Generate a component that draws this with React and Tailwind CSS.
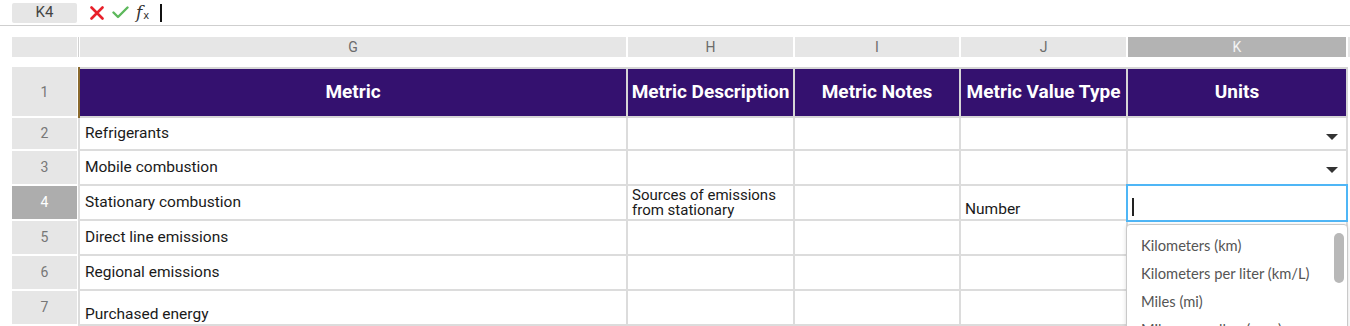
import React from "react";

const rows = [
  { n: "2", h: "h-[33px]", g: "Refrigerants", arrow: true },
  { n: "3", h: "h-[35px]", g: "Mobile combustion", arrow: true },
  { n: "4", h: "h-[35px]", g: "Stationary combustion", sel: true },
  { n: "5", h: "h-[35px]", g: "Direct line emissions" },
  { n: "6", h: "h-[35px]", g: "Regional emissions" },
  { n: "7", h: "h-[35px]", g: "Purchased energy", bottom: true },
];

function Arrow() {
  return (
    <svg width="12" height="6" viewBox="0 0 12 6" className="absolute right-[8px] top-[16px]">
      <polygon points="0,0 12,0 6,6" fill="#333" />
    </svg>
  );
}

export default function App() {
  return (
    <div className="relative w-[1350px] h-[326px] overflow-hidden bg-white font-['Roboto',sans-serif]">
      {/* formula bar */}
      <div className="flex h-[26px] items-center border-b border-[#cfcfcf]">
        <div className="ml-[12px] flex h-[20px] w-[65px] items-center justify-center rounded-[2px] bg-[#e6e6e6] text-[15px] text-[#444]">
          K4
        </div>
        <svg width="14" height="14" viewBox="0 0 14 14" className="ml-[13px]">
          <path d="M1.5 1.5 L12.5 12.5 M12.5 1.5 L1.5 12.5" stroke="#e8202a" strokeWidth="2.6" strokeLinecap="round" />
        </svg>
        <svg width="17" height="13" viewBox="0 0 17 13" className="ml-[8px]">
          <path d="M1.5 6.5 L6 11 L15.5 1.5" stroke="#5db85c" strokeWidth="2.4" fill="none" strokeLinecap="round" strokeLinejoin="round" />
        </svg>
        <div className="ml-[7px] flex items-end text-[#333]">
          <span className="font-['DejaVu_Serif',serif] text-[17px] italic leading-none">f</span>
          <span className="ml-[1px] font-['DejaVu_Sans',sans-serif] text-[10px] leading-none">x</span>
        </div>
        <div className="ml-[11px] h-[18px] w-[2px] bg-[#111]" />
      </div>

      <div className="h-[11px]" />

      {/* column headers */}
      <div className="ml-[12px] flex h-[20px] text-[14px] text-[#6b6b6b]">
        <div className="w-[65px] bg-[#e6e6e6]" />
        <div className="flex w-[3px] bg-white">
          <div className="ml-[1px] w-[1px] bg-[#d0d0d0]" />
        </div>
        <div className="flex w-[548px] items-center justify-center border-r-2 border-white bg-[#e6e6e6]">G</div>
        <div className="flex w-[167px] items-center justify-center border-r-2 border-white bg-[#e6e6e6]">H</div>
        <div className="flex w-[166px] items-center justify-center border-r-2 border-white bg-[#e6e6e6]">I</div>
        <div className="flex w-[167px] items-center justify-center border-r-2 border-white bg-[#e6e6e6]">J</div>
        <div className="flex w-[220px] items-center justify-center border-r-2 border-white bg-[#b3b3b3] text-[#f4f4f4]">K</div>
        <div className="w-[2px] bg-[#e6e6e6]" />
      </div>

      <div className="h-[10px]" />

      {/* body */}
      <div className="ml-[12px] flex flex-col">
        {/* row 1 */}
        <div className="flex h-[51px]">
          <div className="flex w-[65px] items-center justify-center border-b-2 border-white bg-[#e6e6e6] pt-[2px] text-[14px] text-[#777]">1</div>
          <div className="flex w-[3px] bg-white">
            <div className="ml-[1px] w-[2px] bg-[#8a6a2e]" />
          </div>
          {[
            ["w-[548px]", "Metric"],
            ["w-[167px]", "Metric Description"],
            ["w-[166px]", "Metric Notes"],
            ["w-[167px]", "Metric Value Type"],
            ["w-[220px]", "Units"],
          ].map(([w, t]) => (
            <div
              key={t}
              className={`${w} flex items-center justify-center whitespace-nowrap border-y-2 border-r-2 border-[#d6d6d6] bg-[#34116f] text-[19px] font-bold text-white`}
            >
              {t}
            </div>
          ))}
        </div>

        {rows.map((r) => (
          <div key={r.n} className={`flex ${r.h}`}>
            <div
              className={`flex w-[65px] items-center justify-center border-b-2 border-white text-[14px] ${
                r.sel ? "bg-[#adadad] text-white" : "bg-[#e6e6e6] text-[#777]"
              }`}
            >
              {r.n}
            </div>
            <div className="flex w-[3px] bg-white">
              <div className="ml-[1px] w-[2px] bg-[#dcdcdc]" />
            </div>
            <div
              className={`flex w-[548px] border-b-2 border-r-2 border-[#dcdcdc] pl-[5px] text-[15.5px] text-[#1a1a1a] ${
                r.bottom ? "items-end pb-0 leading-[20px]" : "items-center"
              }`}
            >
              {r.g}
            </div>
            <div className="w-[167px] overflow-hidden border-b-2 border-r-2 border-[#dcdcdc] pl-[4px] pt-[2px] text-[15px] leading-[15px] text-[#1a1a1a]">
              {r.sel ? (
                <div>
                  Sources of emissions
                  <br />
                  from stationary
                  <br />
                  combustion, including
                </div>
              ) : null}
            </div>
            <div className="w-[166px] border-b-2 border-r-2 border-[#dcdcdc]" />
            <div className="flex w-[167px] items-end border-b-2 border-r-2 border-[#dcdcdc] pb-0 pl-[4px] text-[15.5px] leading-[20px] text-[#1a1a1a]">
              {r.sel ? "Number" : ""}
            </div>
            <div className="relative w-[220px] border-b-2 border-r-2 border-[#dcdcdc]">
              {r.arrow ? <Arrow /> : null}
            </div>
          </div>
        ))}
      </div>

      {/* selected cell editor */}
      <div className="absolute left-[1126px] top-[184px] flex h-[38px] w-[222px] items-end border-2 border-[#4fb6f6] bg-white pb-[4px] pl-[4px]">
        <div className="h-[18px] w-[2px] bg-[#222]" />
      </div>

      {/* dropdown */}
      <div className="absolute left-[1126px] top-[224px] h-[120px] w-[222px] rounded-t-[4px] border border-[#c9c9c9] bg-white pt-[6px] font-['Lato',sans-serif] text-[14.7px] text-[#555] shadow-[0_1px_4px_rgba(0,0,0,0.15)]">
        <div className="flex h-[28px] items-center pl-[14px]">Kilometers (km)</div>
        <div className="flex h-[28px] items-center pl-[14px]">Kilometers per liter (km/L)</div>
        <div className="flex h-[28px] items-center pl-[14px]">Miles (mi)</div>
        <div className="flex h-[28px] items-center pl-[14px]">Miles per gallon (mpg)</div>
        <div className="absolute left-[207px] top-[8px] h-[50px] w-[10px] rounded-full bg-[#b8b8b8]" />
      </div>
    </div>
  );
}
